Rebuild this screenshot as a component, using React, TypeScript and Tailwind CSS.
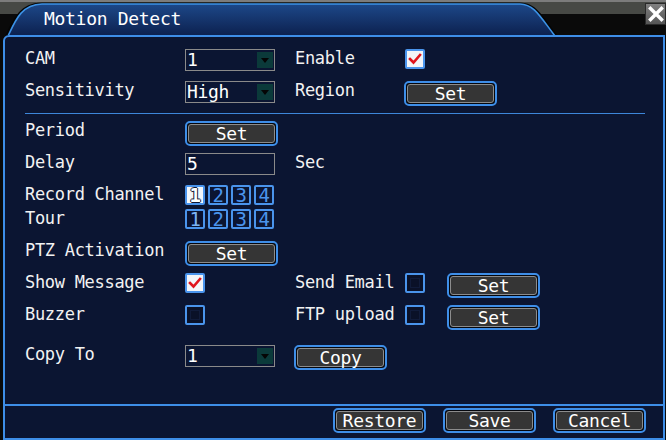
import React from 'react';

const font = "font-['DejaVu_Sans_Mono',monospace] text-[17px] tracking-[-0.3px]";

const Label: React.FC<{ w: string; children: React.ReactNode }> = ({ w, children }) => (
  <div className={`${w} shrink-0 leading-[22px] mt-[3px] text-[#f2f2f2] whitespace-nowrap`}>{children}</div>
);

const Btn: React.FC<{ label: string }> = ({ label }) => (
  <div className="w-[93px] h-[25px] shrink-0 rounded-[5px] border-2 border-[#3e8ee8] bg-[#05070d] p-px">
    <div className="h-full rounded-[3px] border border-[#8c8c8c] bg-[#353535] flex items-center justify-center text-white text-[18px] leading-none">
      {label}
    </div>
  </div>
);

const Select: React.FC<{ value: string }> = ({ value }) => (
  <div className="w-[90px] h-[22px] border border-[#8a8a8a] flex items-center justify-between pl-[1px] pr-[1px]">
    <span className="text-white text-[18px] leading-none">{value}</span>
    <span className="w-[16px] h-[16px] bg-[#0b3a3a] flex items-center justify-center">
      <svg width="8" height="5" viewBox="0 0 8 5">
        <path d="M0 0 L8 0 L4 5 Z" fill="#050505" />
      </svg>
    </span>
  </div>
);

const Check: React.FC<{ on?: boolean }> = ({ on }) => (
  <div
    className={`w-[20px] h-[20px] shrink-0 rounded-[2px] border-2 border-[#4a94ec] flex items-center justify-center ${
      on ? 'bg-[#f3f5f8]' : 'bg-[#0a1128]'
    }`}
  >
    {on ? (
      <svg width="14" height="12" viewBox="0 0 14 12">
        <path d="M2 6 L5.5 9.5 L12 2" stroke="#e0141c" strokeWidth="2.6" fill="none" strokeLinecap="square" />
      </svg>
    ) : (
      <div className="w-[10px] h-[10px] border border-[#101b3a]" />
    )}
  </div>
);

const NumBox: React.FC<{ n: number; selected?: boolean; dim?: boolean }> = ({ n, selected, dim }) => (
  <div
    className={`w-[20px] h-[20px] rounded-[2px] border-2 border-[#4a94ec] flex items-center justify-center text-[19px] leading-none ${
      selected
        ? 'bg-[#f3f6fa] text-white font-bold [text-shadow:1px_0_0_#0b1532,-1px_0_0_#0b1532,0_1px_0_#0b1532,0_-1px_0_#0b1532]'
        : dim
        ? 'bg-[#0a1230] text-[#7cb4f4]'
        : 'bg-[#0b1532] text-[#4a94ec]'
    }`}
  >
    {n}
  </div>
);

const Row: React.FC<{ h?: string; className?: string; children: React.ReactNode }> = ({ h = 'h-[32px]', className = '', children }) => (
  <div className={`flex items-start ${h} ${className}`}>{children}</div>
);

const Ctl: React.FC<{ w?: string; children: React.ReactNode }> = ({ w = 'w-[110px]', children }) => (
  <div className={`${w} shrink-0 mt-[5px] flex`}>{children}</div>
);

export default function App() {
  return (
    <div className={`w-[666px] h-[440px] flex flex-col bg-[#0a0a0a] overflow-hidden ${font}`}>
      {/* title strip */}
      <div className="relative h-[35px] shrink-0 bg-[linear-gradient(to_bottom,#7c7c7c_0px,#7c7c7c_2px,#474945_2px,#474945_14px,#0a0a0a_14px)]">
        <svg className="absolute inset-0" width="666" height="35" viewBox="0 0 666 35">
          <defs>
            <linearGradient id="tab" x1="0" y1="0" x2="0" y2="1">
              <stop offset="0" stopColor="#1d4889" />
              <stop offset="1" stopColor="#0c204e" />
            </linearGradient>
          </defs>
          <path d="M5 36 C 14 18 20 3 42 2.5 L 520 2.5 C 536 3 541 14 558 36 Z" fill="#050505" />
          <path d="M8 36 C 16 19 22 4.5 42 4 L 520 4 C 534 4.5 539 15 555 36 Z" fill="url(#tab)" stroke="#3c92e6" strokeWidth="1.6" />
        </svg>
        <div className="relative pl-[44px] pt-[8px] leading-[22px] text-white text-[18px]">Motion Detect</div>
        <div className="absolute right-0 top-[3px] w-[21px] h-[22px] bg-[linear-gradient(to_bottom,#808080_0%,#555_100%)] border border-[#2a2a2a] flex items-center justify-center">
          <svg width="16" height="16" viewBox="0 0 16 16">
            <path d="M2.5 2.5 L13.5 13.5 M13.5 2.5 L2.5 13.5" stroke="#ffffff" strokeWidth="3.4" strokeLinecap="square" />
          </svg>
        </div>
      </div>

      {/* panel */}
      <div className="flex-1 flex flex-col ml-[3px] mr-[1px] border-2 border-[#3e8ee8] rounded-tl-[6px] bg-[#0b1532]">
        <div className="flex-1 pl-[20px] pt-[7px]">
          <Row>
            <Label w="w-[160px]">CAM</Label>
            <Ctl><Select value="1" /></Ctl>
            <Label w="w-[110px]">Enable</Label>
            <Ctl w="w-auto"><Check on /></Ctl>
          </Row>
          <Row>
            <Label w="w-[160px]">Sensitivity</Label>
            <Ctl><Select value="High" /></Ctl>
            <Label w="w-[109px]">Region</Label>
            <Ctl w="w-auto"><Btn label="Set" /></Ctl>
          </Row>
          <div className="mt-[5px] w-[620px] h-px bg-[#3d86da]" />
          <Row className="mt-[2px]">
            <Label w="w-[160px]">Period</Label>
            <Ctl><Btn label="Set" /></Ctl>
          </Row>
          <Row>
            <Label w="w-[160px]">Delay</Label>
            <Ctl>
              <div className="w-[90px] h-[22px] border border-[#8a8a8a] pl-[1px] flex items-center text-white text-[18px] leading-none">5</div>
            </Ctl>
            <Label w="w-[110px]">Sec</Label>
          </Row>
          <Row h="h-[24px]">
            <Label w="w-[160px]">Record Channel</Label>
            <Ctl>
              <div className="flex gap-[3px]">
                <NumBox n={1} selected />
                <NumBox n={2} />
                <NumBox n={3} />
                <NumBox n={4} />
              </div>
            </Ctl>
          </Row>
          <Row>
            <Label w="w-[160px]">Tour</Label>
            <Ctl>
              <div className="flex gap-[3px]">
                <NumBox n={1} dim />
                <NumBox n={2} />
                <NumBox n={3} />
                <NumBox n={4} />
              </div>
            </Ctl>
          </Row>
          <Row>
            <Label w="w-[160px]">PTZ Activation</Label>
            <Ctl><Btn label="Set" /></Ctl>
          </Row>
          <Row>
            <Label w="w-[160px]">Show Message</Label>
            <Ctl><Check on /></Ctl>
            <Label w="w-[110px]">Send Email</Label>
            <Ctl w="w-[42px]"><Check /></Ctl>
            <Ctl w="w-auto"><Btn label="Set" /></Ctl>
          </Row>
          <Row>
            <Label w="w-[160px]">Buzzer</Label>
            <Ctl><Check /></Ctl>
            <Label w="w-[110px]">FTP upload</Label>
            <Ctl w="w-[42px]"><Check /></Ctl>
            <Ctl w="w-auto"><Btn label="Set" /></Ctl>
          </Row>
          <Row className="mt-[8px]">
            <Label w="w-[160px]">Copy To</Label>
            <Ctl w="w-[109px]"><Select value="1" /></Ctl>
            <Ctl w="w-auto"><Btn label="Copy" /></Ctl>
          </Row>
        </div>
        <div className="h-[34px] shrink-0 border-t-2 border-[#3e8ee8] flex items-start justify-end gap-[17px] pr-[17px] pt-[2px]">
          <Btn label="Restore" />
          <Btn label="Save" />
          <Btn label="Cancel" />
        </div>
      </div>
    </div>
  );
}
